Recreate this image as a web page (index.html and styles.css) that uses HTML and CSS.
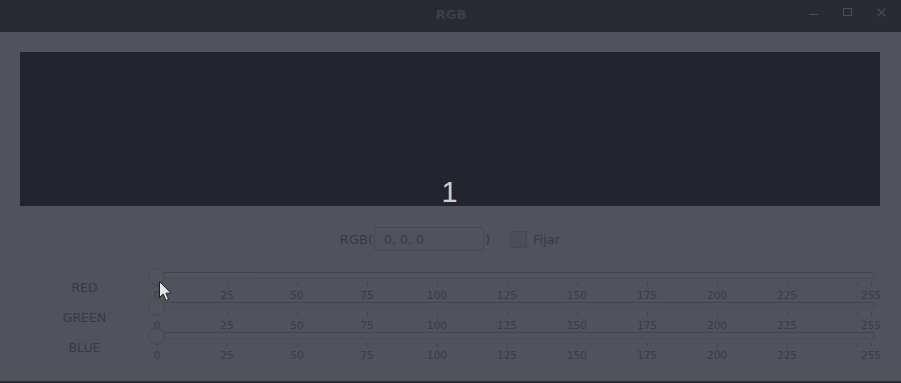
FILE: index.html
```html
<!DOCTYPE html>
<html>
<head>
<meta charset="utf-8">
<title>RGB</title>
<link rel="stylesheet" href="styles.css">
</head>
<body>
<div class="window">
  <header class="titlebar">
    <div class="spacer"></div>
    <div class="title">RGB</div>
    <div class="controls">
      <svg class="ctl" width="9" height="9" viewBox="0 0 9 9"><line x1="0" y1="6.5" x2="9" y2="6.5" stroke="#4a4d55" stroke-width="1"/></svg>
      <svg class="ctl" width="9" height="9" viewBox="0 0 9 9"><rect x="0.5" y="0.5" width="8" height="7" fill="none" stroke="#4a4d55" stroke-width="1"/></svg>
      <svg class="ctl" width="9" height="9" viewBox="0 0 9 9"><path d="M0.5 0.5 L8.5 8.5 M8.5 0.5 L0.5 8.5" fill="none" stroke="#4a4d55" stroke-width="1.1"/></svg>
    </div>
  </header>
  <main class="content">
    <div class="canvas"><span class="value">1</span></div>
    <div class="rgb-row">
      <span class="txt">RGB(</span>
      <div class="field">0, 0, 0</div>
      <span class="txt paren">)</span>
      <div class="check"><span class="box"></span><span class="txt">Fijar</span></div>
    </div>
    <div class="sliders">
      <div class="slider-row">
        <div class="label">RED</div>
        <div class="slider">
          <div class="track"></div>
          <div class="ticks"></div>
          <div class="scale"><span>0</span><span>25</span><span>50</span><span>75</span><span>100</span><span>125</span><span>150</span><span>175</span><span>200</span><span>225</span><span class="last">255</span></div>
          <div class="thumb"></div>
        </div>
      </div>
      <div class="slider-row">
        <div class="label">GREEN</div>
        <div class="slider">
          <div class="track"></div>
          <div class="ticks"></div>
          <div class="scale"><span>0</span><span>25</span><span>50</span><span>75</span><span>100</span><span>125</span><span>150</span><span>175</span><span>200</span><span>225</span><span class="last">255</span></div>
          <div class="thumb"></div>
        </div>
      </div>
      <div class="slider-row">
        <div class="label">BLUE</div>
        <div class="slider">
          <div class="track"></div>
          <div class="ticks"></div>
          <div class="scale"><span>0</span><span>25</span><span>50</span><span>75</span><span>100</span><span>125</span><span>150</span><span>175</span><span>200</span><span>225</span><span class="last">255</span></div>
          <div class="thumb"></div>
        </div>
      </div>
    </div>
  </main>
  <svg class="cursor" width="14" height="21" viewBox="0 0 14 21"><path d="M0.5 0.5 L0.5 16.5 L4.2 13 L7 19.5 L9.6 18.4 L6.9 12.2 L12 12.2 Z" fill="#e2e2e2" stroke="#1e1f22" stroke-width="1" stroke-linejoin="miter"/></svg>
</div>
</body>
</html>
```
FILE: styles.css
```css
html, body {
  margin: 0;
  padding: 0;
}
body {
  width: 901px;
  height: 383px;
  background: #2b2d32;
  overflow: hidden;
  font-family: "DejaVu Sans", sans-serif;
}
.window {
  position: relative;
  width: 901px;
  height: 381px;
  background: #50535c;
}
.titlebar {
  height: 32px;
  background: #282b31;
  display: grid;
  grid-template-columns: 1fr auto 1fr;
  align-items: center;
}
.title {
  font-weight: bold;
  font-size: 13px;
  color: #3c3f47;
  padding-bottom: 3px;
  padding-left: 1px;
}
.controls {
  display: flex;
  justify-content: flex-end;
  gap: 25px;
  padding-right: 15px;
  padding-bottom: 7px;
}
.ctl {
  display: block;
}
.content {
  padding: 20px 21px 0 20px;
}
.canvas {
  height: 154px;
  background: #22252e;
  display: flex;
  justify-content: center;
  align-items: flex-end;
  box-sizing: border-box;
}
.value {
  font-family: "Liberation Sans", Arial, sans-serif;
  font-size: 29px;
  line-height: 26px;
  color: #cdd0d6;
  padding-bottom: 1px;
  padding-right: 1px;
}
.rgb-row {
  margin-top: 21px;
  height: 24px;
  display: flex;
  justify-content: center;
  align-items: center;
}
.txt {
  font-size: 13px;
  color: #373a41;
}
.field {
  width: 110px;
  height: 24px;
  box-sizing: border-box;
  border: 1px solid #46494f;
  border-radius: 3px;
  margin-left: 1px;
  padding-left: 9px;
  font-size: 12.5px;
  color: #393c43;
  display: flex;
  align-items: center;
}
.paren {
  margin-left: 1px;
}
.check {
  display: flex;
  align-items: center;
  gap: 6px;
  margin-left: 20px;
}
.box {
  width: 17px;
  height: 17px;
  box-sizing: border-box;
  border: 1px solid #45484f;
  border-radius: 2px;
  background: #4c4f57;
}
.sliders {
  margin-top: 16px;
}
.slider-row {
  height: 30px;
  display: flex;
}
.label {
  width: 129px;
  flex: none;
  text-align: center;
  padding-top: 13px;
  font-size: 12.5px;
  line-height: 15px;
  color: #373a41;
}
.slider {
  position: relative;
  flex: 1;
  height: 30px;
}
.track {
  margin-top: 5px;
  margin-left: 4px;
  width: 721px;
  height: 5px;
  border-top: 1px solid #42454c;
  border-bottom: 1px dotted #45484f;
  border-right: 1px solid #45484f;
  border-radius: 0 4px 4px 0;
}
.ticks {
  position: relative;
  margin-top: 3px;
  margin-left: 8px;
  width: 701px;
  height: 5px;
  background:
    repeating-linear-gradient(to right, #44474e 0 1px, transparent 1px 70px) 0 0 / 701px 5px no-repeat,
    repeating-linear-gradient(to right, #46494f 0 1px, transparent 1px 70px) 35px 0 / 666px 2px no-repeat;
}
.ticks::after {
  content: "";
  position: absolute;
  left: 714px;
  top: 0;
  width: 1px;
  height: 5px;
  background: #44474e;
}
.scale {
  display: flex;
  margin-left: -27px;
  margin-top: 2px;
  font-size: 10.5px;
  line-height: 12px;
  color: #3a3d44;
}
.scale span {
  flex: none;
  width: 70px;
  text-align: center;
}
.scale span.last {
  margin-left: 14px;
}
.thumb {
  position: absolute;
  left: -1px;
  top: 1px;
  width: 17px;
  height: 17px;
  box-sizing: border-box;
  border-radius: 50%;
  border: 1px solid #46494f;
  background: #51545d;
}
.cursor {
  position: absolute;
  left: 159px;
  top: 281px;
}
```
